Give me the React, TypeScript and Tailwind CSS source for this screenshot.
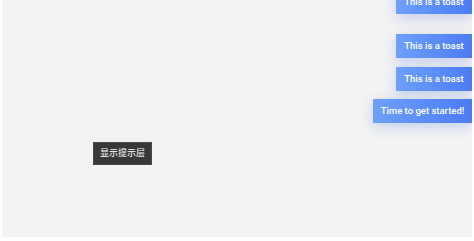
import React from "react";

const toastCls =
  "h-[24px] flex items-center justify-center text-[9.5px] font-medium text-white bg-gradient-to-r from-[#6ea0fa] to-[#4c7bf4] shadow-[0_4px_14px_rgba(80,110,220,0.28)] whitespace-nowrap";

export default function App() {
  return (
    <div
      className="w-[474px] h-[241px] bg-white overflow-hidden"
      style={{ fontFamily: "Roboto, 'Noto Sans CJK SC', sans-serif" }}
    >
      <div className="relative mx-[2px] h-[237px] bg-[#f3f3f3] overflow-hidden">
        <div className="absolute right-0 top-[-10px] flex flex-col items-end">
          <div className={toastCls + " w-[76px]"}>This is a toast</div>
          <div className="h-[20px]" />
          <div className={toastCls + " w-[76px]"}>This is a toast</div>
          <div className="h-[9px]" />
          <div className={toastCls + " w-[76px]"}>This is a toast</div>
          <div className="h-[8px]" />
          <div className={toastCls + " w-[99px]"}>Time to get started!</div>
        </div>
        <div className="absolute left-[91px] top-[142px] h-[23px] w-[59px] flex items-center justify-center bg-[#383838] text-white text-[9px] border border-[#4a4a4a]">
          显示提示层
        </div>
      </div>
    </div>
  );
}
